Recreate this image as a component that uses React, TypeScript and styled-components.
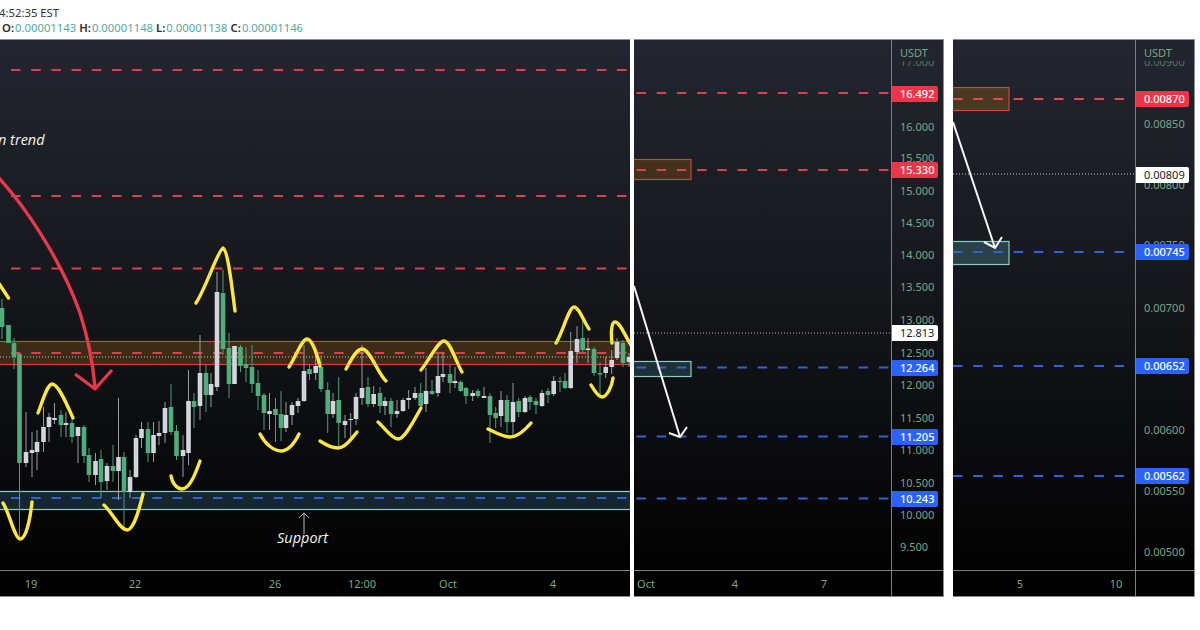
import styled, { createGlobalStyle } from "styled-components"

const GlobalStyle = createGlobalStyle`
  html, body {
    margin: 0;
    background: #fff;
  }
  body {
    width: 1200px;
    height: 630px;
    overflow: hidden;
    font-family: "Noto Sans", "Open Sans", sans-serif;
  }
`

const Page = styled.div`
  width: 1200px;
  height: 630px;
  display: flex;
  flex-direction: column;
  background: #fff;
`

const Header = styled.header`
  height: 39px;
  padding-top: 5px;
  box-sizing: border-box;
  font-size: 11.3px;
  line-height: 15px;
  color: #333;
  overflow: hidden;
`

const TimeRow = styled.div`
  margin-left: -1px;
`

const OhlcRow = styled.div`
  display: flex;
  margin-left: 2px;
  gap: 3px;
`

const OhlcItem = styled.span`
  font-weight: 600;
  color: #2b2b2b;
`

const OhlcValue = styled.span`
  margin-left: 1px;
  font-weight: 400;
  color: #56a89d;
`

const ChartRow = styled.div`
  display: flex;
  align-items: flex-start;
`

const Panel = styled.section<{ $width: number; $axis: number; $gap: number }>`
  width: ${(p) => p.$width}px;
  height: 558px;
  margin-right: ${(p) => p.$gap}px;
  box-sizing: border-box;
  flex: none;
  display: grid;
  grid-template-columns: 1fr ${(p) => p.$axis}px;
  grid-template-rows: 1fr 26px;
  border-top: 1px solid #8a8c94;
  border-bottom: 1px solid #8a8c94;
  border-right: ${(p) => (p.$axis ? "1px solid #8a8c94" : "0")};
  background: linear-gradient(180deg, #23262f 0%, #15171c 45%, #000 100%);
  overflow: hidden;
`

const Plot = styled.div`
  position: relative;
  overflow: hidden;
  min-width: 0;
`

const PlotSvg = styled.svg`
  display: block;
  width: 100%;
  height: 100%;
`

const Note = styled.span<{ $x: number; $y: number }>`
  position: absolute;
  left: ${(p) => p.$x}px;
  top: ${(p) => p.$y}px;
  font-family: "Open Sans", sans-serif;
  font-style: italic;
  font-weight: 500;
  font-size: 14.5px;
  line-height: 18px;
  color: #f4f4f4;
`

const PriceAxis = styled.div`
  position: relative;
  border-left: 1px solid #7c7e87;
  overflow: hidden;
`

const Unit = styled.div`
  position: absolute;
  z-index: 2;
  top: 0;
  left: 0;
  right: 0;
  height: 21px;
  padding: 6px 0 0 8px;
  box-sizing: border-box;
  font-size: 11px;
  line-height: 14px;
  color: #76a787;
  background: #22252e;
`

const Tick = styled.span<{ $y: number; $faded?: boolean }>`
  position: absolute;
  left: 8px;
  top: ${(p) => p.$y - 48}px;
  font-size: 11px;
  line-height: 16px;
  color: #76a787;
  opacity: ${(p) => (p.$faded ? 0.6 : 1)};
`

const Tag = styled.span<{ $y: number; $kind: "red" | "blue" | "white" }>`
  position: absolute;
  z-index: 1;
  left: 0;
  right: 5px;
  top: ${(p) => p.$y - 48}px;
  height: 16px;
  padding-left: 8px;
  border-radius: 0 2px 2px 0;
  font-size: 11px;
  line-height: 16px;
  font-weight: ${(p) => (p.$kind === "white" ? 400 : 500)};
  color: ${(p) => (p.$kind === "white" ? "#222" : "#fff")};
  background: ${(p) =>
    p.$kind === "red" ? "#ee3447" : p.$kind === "blue" ? "#2962ff" : "#fff"};
`

const TimeAxis = styled.div`
  position: relative;
  border-top: 1px solid #7c7e87;
`

const TimeLabel = styled.span<{ $x: number }>`
  position: absolute;
  left: ${(p) => p.$x}px;
  top: 5px;
  transform: translateX(-50%);
  font-size: 11px;
  line-height: 16px;
  color: #76a787;
`

const Corner = styled.div`
  border-top: 1px solid #7c7e87;
  border-left: 1px solid #7c7e87;
`

// x, body top, body bottom, wick top, wick bottom, colour (page coordinates)
type Candle = [number, number, number, number, number, "g" | "w"]

const candles: Candle[] = [
  [2, 308, 327, 299, 339, "g"], [8.5, 325, 343, 325, 343, "g"], [14, 343, 357, 338, 369, "g"],
  [19.5, 354, 463, 354, 540, "g"], [26, 452, 463, 412, 467, "w"], [32, 450, 453, 432, 477, "w"],
  [37, 442, 452, 430, 470, "w"], [43.5, 427, 442, 407, 452, "w"], [49, 417, 427, 413, 442, "w"],
  [54.5, 418, 420, 403, 424, "w"], [61, 415, 425, 410, 437, "g"], [66, 423, 425, 412, 437, "w"],
  [72, 423, 437, 419, 443, "g"], [78, 427, 436, 427, 463, "w"], [84, 427, 456, 425, 463, "g"],
  [89, 455, 475, 448, 482, "g"], [95.5, 461, 475, 453, 485, "w"], [101, 459, 482, 450, 498, "g"],
  [107, 466, 481, 463, 490, "w"], [113, 466, 471, 445, 482, "g"], [118.5, 457, 471, 398, 500, "w"],
  [124, 457, 492, 452, 530, "g"], [130, 477, 492, 470, 498, "w"], [136, 438, 477, 435, 478, "w"],
  [141.5, 429, 438, 422, 448, "w"], [148, 429, 453, 422, 462, "g"], [153.5, 435, 453, 422, 462, "w"],
  [159, 433, 436, 421, 445, "w"], [165, 408, 433, 402, 443, "w"], [171, 407, 432, 384, 435, "g"],
  [176.5, 431, 456, 425, 460, "g"], [183, 450, 456, 435, 477, "w"], [188.5, 401, 453, 370, 465, "w"],
  [194, 401, 407, 393, 428, "g"], [200, 373, 406, 335, 420, "w"], [206, 373, 395, 365, 412, "g"],
  [211, 384, 395, 373, 407, "w"], [217, 292, 387, 272, 391, "w"], [223, 293, 349, 270, 355, "g"],
  [229, 348, 384, 333, 398, "g"], [234.5, 346, 384, 346, 384, "w"], [240.5, 347, 366, 345, 372, "g"],
  [246, 364, 368, 347, 382, "g"], [252, 367, 384, 345, 393, "g"], [258, 383, 396, 370, 410, "g"],
  [264, 395, 413, 393, 430, "g"], [269.5, 411, 414, 393, 430, "w"], [275.5, 409, 415, 398, 442, "g"],
  [281, 414, 428, 391, 441, "g"], [286, 415, 428, 402, 432, "w"], [292, 405, 415, 402, 425, "w"],
  [298, 401, 406, 398, 413, "w"], [304, 371, 401, 345, 402, "w"], [309.5, 369, 374, 365, 380, "g"],
  [315.7, 366, 373, 355, 380, "w"], [321, 367, 389, 355, 392, "g"], [327.7, 390, 414, 382, 433, "g"],
  [333, 401, 414, 393, 418, "w"], [338.7, 400, 423, 377, 447, "g"], [345, 421, 425, 415, 438, "w"],
  [350.7, 419, 420, 413, 437, "w"], [356, 397, 419, 393, 425, "w"], [362, 388, 398, 345, 405, "w"],
  [368, 387, 404, 377, 407, "g"], [373.7, 394, 404, 386, 407, "w"], [380, 393, 406, 387, 413, "g"],
  [385, 401, 406, 397, 415, "w"], [391, 401, 414, 398, 427, "g"], [397, 411, 414, 400, 418, "w"],
  [403, 400, 411, 398, 412, "w"], [408.7, 398, 400, 390, 409, "w"], [415, 393, 398, 387, 400, "w"],
  [420.7, 393, 406, 383, 410, "g"], [426, 391, 404, 368, 412, "w"], [432, 391, 394, 380, 395, "g"],
  [438, 376, 393, 354, 397, "w"], [443, 374, 377, 353, 382, "w"], [450, 374, 383, 365, 393, "g"],
  [455, 381, 383, 367, 388, "w"], [460.7, 382, 391, 380, 392, "g"], [466, 388, 396, 387, 404, "g"],
  [472.7, 393, 396, 390, 401, "w"], [478, 391, 396, 389, 398, "g"], [484, 396, 398, 387, 398, "w"],
  [490, 396, 415, 393, 443, "g"], [495.7, 413, 418, 407, 428, "g"], [501, 400, 416, 391, 427, "w"],
  [507, 400, 422, 395, 433, "g"], [513, 402, 422, 383, 435, "w"], [518.7, 401, 412, 398, 417, "g"],
  [525, 398, 412, 396, 413, "w"], [530, 397, 402, 395, 410, "g"], [536, 401, 405, 398, 414, "g"],
  [542, 393, 406, 390, 407, "w"], [548, 391, 395, 388, 403, "g"], [553.7, 381, 394, 376, 396, "w"],
  [560, 381, 382, 377, 392, "g"], [565, 381, 388, 373, 389, "g"], [570.7, 351, 388, 332, 389, "w"],
  [577, 339, 352, 326, 363, "w"], [582.7, 338, 350, 320, 352, "g"], [588, 348.5, 350, 338, 363, "w"],
  [594, 349, 373, 347, 376, "g"], [600, 373, 374.5, 362, 397, "g"], [605.7, 367, 373, 357, 378, "w"],
  [611.7, 360, 367, 350, 374, "w"], [617, 342, 358, 338, 360, "w"], [623, 343, 363, 340, 367, "g"],
  [629, 357, 362, 353, 367, "w"],
]

const bumps = [
  "M-2 282 L8.5 298",
  "M38 413 C43 400 47 385 52 384 C58 384 66 402 73 418",
  "M3 503 C9 512 15 539 20 539 C26 539 30 520 32 502",
  "M104 505 C112 512 120 530 127 530 C134 530 139 510 143 494",
  "M171 476 C172 483 177 489 182 489 C190 489 196 472 200 461",
  "M196 303 C206 288 218 250 223 248 C228 250 232 288 235 311",
  "M260 434 C265 444 274 451 281 451 C289 451 295 442 299 434",
  "M289 367 C295 358 302 339 307 339 C312 339 317 354 320 366",
  "M346 369 C350 362 356 349 362 349 C370 349 378 374 386 381",
  "M320 441 C326 445 332 448 338 448 C345 448 351 439 357 432",
  "M378 422 C384 427 392 439 398 439 C405 439 414 420 421 408",
  "M421 370 C428 362 438 341 444 341 C450 341 456 362 462 372",
  "M488 429 C496 433 503 437 510 437 C518 437 525 430 531 423",
  "M556 343 C562 334 569 307 574 307 C579 307 584 322 589 329",
  "M591 385 C594 390 598 397 602 397 C607 397 612 386 613 378",
  "M612 343 C611 335 611 322 615 322 C620 322 625 336 631 345",
]

function DashLine({ y, x1, x2, color }: { y: number; x1: number; x2: number; color: string }) {
  return <line x1={x1} x2={x2} y1={y} y2={y} stroke={color} strokeWidth={2} strokeDasharray="9.5 10.7" />
}

const RED = "#d8414f"
const BLUE = "#2f62d6"

function MainPlot() {
  return (
    <Plot>
      <PlotSvg viewBox="0 40 630 530" preserveAspectRatio="none">
        <rect x={-2} y={341.5} width={640} height={23} fill="#3b2c17" stroke="#e03a42" strokeWidth={1.2} />
        <rect x={-2} y={491.5} width={640} height={18} fill="#152630" stroke="#8ccbc6" strokeWidth={1.2} />
        <line x1={0} x2={630} y1={357} y2={357} stroke="#c9c4b0" strokeWidth={1} strokeDasharray="1 2" />
        {[70, 196, 268.5, 353].map((y) => (
          <DashLine key={y} y={y} x1={11} x2={630} color={RED} />
        ))}
        <DashLine y={498} x1={11} x2={630} color={BLUE} />
        {candles.map(([x, top, bottom, wickTop, wickBottom, kind]) => {
          const fill = kind === "g" ? "#4fae7b" : "#d3d5dc"
          return (
            <g key={x}>
              <line x1={x} x2={x} y1={wickTop} y2={wickBottom} stroke={kind === "g" ? "#4c9f74" : "#9a9ca3"} strokeWidth={1} />
              <rect x={x - 2.3} y={top} width={4.6} height={bottom - top} fill={fill} />
            </g>
          )
        })}
        <path d="M-4 175 C25 205 62 262 80 313 C88 338 93 365 95 387" fill="none" stroke="#e8384a" strokeWidth={3.4} />
        <path d="M75 374 L95 389 L112 370" fill="none" stroke="#e8384a" strokeWidth={3.2} strokeLinejoin="round" />
        {bumps.map((d) => (
          <path key={d} d={d} fill="none" stroke="#fde73f" strokeWidth={3.4} strokeLinecap="round" />
        ))}
        <path d="M304 534 L304 513 M299 518 L304 513 L309 518" fill="none" stroke="#b9bbc0" strokeWidth={1} />
      </PlotSvg>
      <Note $x={-2} $y={91}>n trend</Note>
      <Note $x={277} $y={489}>Support</Note>
    </Plot>
  )
}

function MiddlePlot() {
  return (
    <Plot>
      <PlotSvg viewBox="634 40 257 530" preserveAspectRatio="none">
        <rect x={630} y={159.5} width={61} height={20} fill="#43311c" stroke="#c8453f" strokeWidth={1.2} />
        <rect x={630} y={361.5} width={61} height={15} fill="#1c3138" stroke="#8ccbc6" strokeWidth={1.2} />
        <line x1={634} x2={891} y1={333} y2={333} stroke="#b4b4b4" strokeWidth={1} strokeDasharray="1 2" />
        <DashLine y={93} x1={636.5} x2={891} color={RED} />
        <DashLine y={170} x1={636.5} x2={891} color={RED} />
        <DashLine y={367.5} x1={636.5} x2={891} color={BLUE} />
        <DashLine y={436.5} x1={636.5} x2={891} color={BLUE} />
        <DashLine y={498.5} x1={636.5} x2={891} color={BLUE} />
        <path d="M634 286 L680 437 M669 433 L680 437 L687 427" fill="none" stroke="#f5f5f5" strokeWidth={2} />
      </PlotSvg>
    </Plot>
  )
}

function RightPlot() {
  return (
    <Plot>
      <PlotSvg viewBox="953 40 182 530" preserveAspectRatio="none">
        <rect x={950} y={87.5} width={59} height={23} fill="#4a3823" stroke="#d8453f" strokeWidth={1.2} />
        <rect x={950} y={241.5} width={59} height={23} fill="#2a4149" stroke="#8ccbc6" strokeWidth={1.2} />
        <line x1={953} x2={1135} y1={174} y2={174} stroke="#c4c4c4" strokeWidth={1} strokeDasharray="1 2" />
        <DashLine y={99} x1={953} x2={1135} color="#e8494f" />
        <DashLine y={252} x1={953} x2={1135} color={BLUE} />
        <DashLine y={366} x1={953} x2={1135} color={BLUE} />
        <DashLine y={476} x1={953} x2={1135} color={BLUE} />
        <path d="M953 122 L995 248 M984 242 L995 248 L1002 237" fill="none" stroke="#f5f5f5" strokeWidth={2} />
      </PlotSvg>
    </Plot>
  )
}

type TagInfo = { y: number; kind: "red" | "blue" | "white"; text: string }

function Prices({ ticks, tags, faded }: { ticks: [number, string][]; tags: TagInfo[]; faded: [number, string] }) {
  return (
    <PriceAxis>
      <Tick $y={faded[0]} $faded>{faded[1]}</Tick>
      <Unit>USDT</Unit>
      {ticks.map(([y, text]) => (
        <Tick key={text} $y={y}>{text}</Tick>
      ))}
      {tags.map((t) => (
        <Tag key={t.text} $y={t.y} $kind={t.kind}>{t.text}</Tag>
      ))}
    </PriceAxis>
  )
}

function App() {
  return (
    <Page>
      <GlobalStyle />
      <Header>
        <TimeRow>4:52:35 EST</TimeRow>
        <OhlcRow>
          <OhlcItem>O:<OhlcValue>0.00001143</OhlcValue></OhlcItem>
          <OhlcItem>H:<OhlcValue>0.00001148</OhlcValue></OhlcItem>
          <OhlcItem>L:<OhlcValue>0.00001138</OhlcValue></OhlcItem>
          <OhlcItem>C:<OhlcValue>0.00001146</OhlcValue></OhlcItem>
        </OhlcRow>
      </Header>
      <ChartRow>
        <Panel $width={630} $axis={0} $gap={4}>
          <MainPlot />
          <div />
          <TimeAxis>
            <TimeLabel $x={31}>19</TimeLabel>
            <TimeLabel $x={135}>22</TimeLabel>
            <TimeLabel $x={275}>26</TimeLabel>
            <TimeLabel $x={362}>12:00</TimeLabel>
            <TimeLabel $x={448}>Oct</TimeLabel>
            <TimeLabel $x={553}>4</TimeLabel>
          </TimeAxis>
        </Panel>
        <Panel $width={310} $axis={52} $gap={9}>
          <MiddlePlot />
          <Prices
            faded={[62, "17.000"]}
            ticks={[
              [127, "16.000"], [158, "15.500"], [191, "15.000"], [223, "14.500"], [255, "14.000"],
              [287, "13.500"], [320, "13.000"], [353, "12.500"], [385, "12.000"], [418, "11.500"],
              [450, "11.000"], [483, "10.500"], [515, "10.000"], [547, "9.500"],
            ]}
            tags={[
              { y: 94, kind: "red", text: "16.492" },
              { y: 170, kind: "red", text: "15.330" },
              { y: 333, kind: "white", text: "12.813" },
              { y: 368, kind: "blue", text: "12.264" },
              { y: 437, kind: "blue", text: "11.205" },
              { y: 499, kind: "blue", text: "10.243" },
            ]}
          />
          <TimeAxis>
            <TimeLabel $x={12}>Oct</TimeLabel>
            <TimeLabel $x={101}>4</TimeLabel>
            <TimeLabel $x={190}>7</TimeLabel>
          </TimeAxis>
          <Corner />
        </Panel>
        <Panel $width={242} $axis={59} $gap={0}>
          <RightPlot />
          <Prices
            faded={[62, "0.00900"]}
            ticks={[
              [124, "0.00850"], [185, "0.00800"], [245, "0.00750"], [308, "0.00700"],
              [430, "0.00600"], [491, "0.00550"], [552, "0.00500"],
            ]}
            tags={[
              { y: 99, kind: "red", text: "0.00870" },
              { y: 175, kind: "white", text: "0.00809" },
              { y: 252, kind: "blue", text: "0.00745" },
              { y: 366, kind: "blue", text: "0.00652" },
              { y: 476, kind: "blue", text: "0.00562" },
            ]}
          />
          <TimeAxis>
            <TimeLabel $x={67}>5</TimeLabel>
            <TimeLabel $x={163}>10</TimeLabel>
          </TimeAxis>
          <Corner />
        </Panel>
      </ChartRow>
    </Page>
  )
}

export default App
